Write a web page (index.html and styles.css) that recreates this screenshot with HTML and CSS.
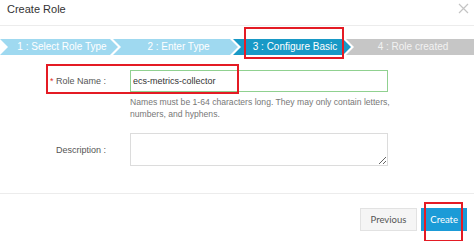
FILE: index.html
```html
<!DOCTYPE html>
<html lang="en">
<head>
    <meta charset="UTF-8">
    <title>Create Role</title>
    <link rel="stylesheet" href="styles.css">
</head>
<body>

<div class="dialog">
    <div class="header">
        <span class="title">Create Role</span>
        <svg class="close" width="11" height="11" viewBox="0 0 11 11">
            <path d="M1 1 L10 10 M10 1 L1 10" stroke="#c4c4c4" stroke-width="1.2" fill="none"/>
        </svg>
    </div>

    <div class="steps">
        <div class="step first done">1 : Select Role Type</div>
        <div class="step done s2">2 : Enter Type</div>
        <div class="step active s3">3 : Configure Basic
            <span class="mark mark-step"></span>
        </div>
        <div class="step todo s4">4 : Role created</div>
    </div>

    <div class="form">
        <div class="row">
            <label class="label"><span class="req">*</span> Role Name :</label>
            <input class="input focus" type="text" value="ecs-metrics-collector">
            <span class="mark mark-name"></span>
        </div>
        <div class="help">Names must be 1-64 characters long. They may only contain letters,<br>numbers, and hyphens.</div>

        <div class="row desc">
            <label class="label">Description :</label>
            <textarea class="input area"></textarea>
        </div>
    </div>

    <div class="footer">
        <button class="btn">Previous</button>
        <button class="btn primary">Create
            <span class="mark mark-create"></span>
        </button>
    </div>
</div>

</body>
</html>
```

FILE: styles.css
```css
body {
    margin: 0;
    font-family: "Liberation Sans", Arial, sans-serif;
    background: #fff;
}
.dialog {
    width: 474px;
    height: 241px;
    overflow: hidden;
}
.header {
    height: 26px;
    border-bottom: 1px solid #ececec;
    display: flex;
    justify-content: space-between;
    padding: 0 5px 0 7px;
    box-sizing: border-box;
}
.title {
    font-size: 11px;
    line-height: 19px;
    color: #333;
}
.close {
    margin-top: 3px;
}

/* steps */
.steps {
    display: flex;
    margin-top: 13px;
    height: 16px;
}
.step {
    position: relative;
    height: 16px;
    line-height: 16px;
    font-size: 10px;
    color: #fff;
    text-align: center;
    padding-left: 6px;
    box-sizing: border-box;
    clip-path: polygon(0 0, calc(100% - 8px) 0, 100% 50%, calc(100% - 8px) 100%, 0 100%, 8px 50%);
}
.first {
    width: 118px;
}
.s2 {
    width: 125px;
    margin-left: -5px;
}
.s3 {
    width: 118px;
    margin-left: -5px;
    clip-path: none;
}
.s4 {
    width: 128px;
    margin-left: -5px;
    clip-path: polygon(0 0, 100% 0, 100% 100%, 0 100%, 8px 50%);
}
.done {
    background: #9fd9f0;
}
.active {
    background: transparent;
}
.active::before {
    content: "";
    position: absolute;
    inset: 0;
    background: #1899c6;
    clip-path: polygon(0 0, calc(100% - 8px) 0, 100% 50%, calc(100% - 8px) 100%, 0 100%, 8px 50%);
    z-index: -1;
}
.todo {
    background: #c6c6c6;
    color: #f2f2f2;
}

/* annotation boxes */
.mark {
    position: absolute;
    border: 2px solid #e41b24;
    pointer-events: none;
}
.mark-step {
    left: 11px;
    top: -12px;
    width: 96px;
    height: 28px;
}
.mark-name {
    left: 46px;
    top: -6px;
    width: 189px;
    height: 26px;
}
.mark-create {
    left: 2px;
    top: -6px;
    width: 35px;
    height: 36px;
}

/* form */
.form {
    margin-top: 15px;
}
.row {
    position: relative;
    display: grid;
    grid-template-columns: 106px 258px;
    column-gap: 24px;
    align-items: center;
}
.label {
    text-align: right;
    font-size: 9px;
    color: #555;
}
.req {
    color: #e0302a;
}
.input {
    box-sizing: border-box;
    margin: 0;
    border: 1px solid #dcdcdc;
    font-family: inherit;
    font-size: 9px;
    color: #333;
    padding: 0 2px;
    outline: none;
}
.focus {
    height: 22px;
    border-color: #90d190;
}
.help {
    margin: 4px 0 0 130px;
    font-size: 8.6px;
    line-height: 12px;
    color: #777;
}
.desc {
    margin-top: 13px;
}
.area {
    height: 33px;
    resize: vertical;
}

/* footer */
.footer {
    margin-top: 27px;
    border-top: 1px solid #ececec;
    display: flex;
    justify-content: flex-end;
    gap: 4px;
    padding: 14px 7px 0 0;
}
.btn {
    position: relative;
    height: 23px;
    font-family: "Lato", sans-serif;
    font-size: 9.5px;
    border: 1px solid #e2e2e2;
    background: #f5f5f5;
    color: #555;
    padding: 0 10px;
}
.primary {
    background: #1b9bd7;
    border-color: #1b9bd7;
    color: #fff;
    padding: 0 8px;
}
.primary .mark-create {
    top: -7px;
}
```
